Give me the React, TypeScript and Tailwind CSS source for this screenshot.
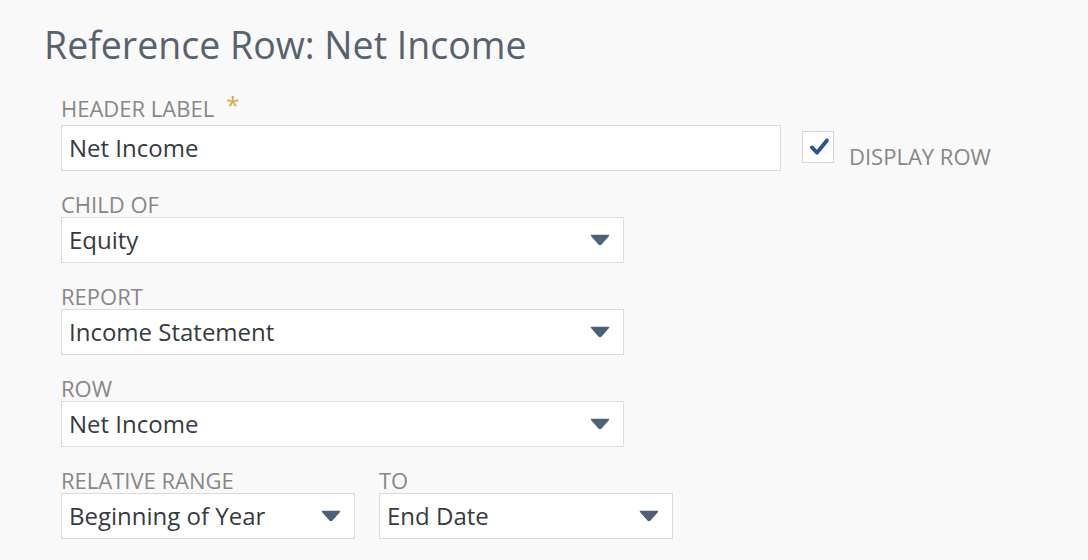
import React from "react";

function Arrow() {
  return (
    <svg width="20" height="12" viewBox="0 0 20 12" className="shrink-0">
      <path d="M1.5 1.5 L18.5 1.5 L11 10 Q10 11 9 10 Z" fill="#4c6077" stroke="#4c6077" strokeWidth="1.5" strokeLinejoin="round" />
    </svg>
  );
}

function Select({ value, width }: { value: string; width: string }) {
  return (
    <div className={`${width} h-[46px] bg-white border border-[#dadada] flex items-center justify-between pl-[7px] pr-[13px]`}>
      <span className="text-[24px] leading-none text-[#363b40]">{value}</span>
      <Arrow />
    </div>
  );
}

function Label({ children }: { children: React.ReactNode }) {
  return <div className="h-[22px] text-[22px] leading-[22px] text-[#878787] uppercase">{children}</div>;
}

function Field({ label, value, width }: { label: string; value: string; width: string }) {
  return (
    <div className="flex flex-col gap-[2px]">
      <Label>{label}</Label>
      <Select value={value} width={width} />
    </div>
  );
}

export default function App() {
  return (
    <div className="w-[1088px] h-[560px] bg-[#f9f9f9] overflow-hidden" style={{ fontFamily: '"Open Sans", "Liberation Sans", sans-serif' }}>
      <div className="pl-[44px] pt-[26px]">
        <h1 className="text-[37.5px] leading-[37px] font-normal text-[#56626d]">Reference Row: Net Income</h1>
      </div>
      <div className="pl-[61px] pt-[34px] flex flex-col gap-[22px]">
        <div className="flex flex-col gap-[6px]">
          <div className="flex items-start">
            <Label>Header Label</Label>
            <span className="ml-[12px] text-[24px] leading-[24px] text-[#dba63c] -mt-[4px]">*</span>
          </div>
          <div className="flex items-start">
            <div className="w-[720px] h-[46px] bg-white border border-[#dadada] flex items-center pl-[7px]">
              <span className="text-[24px] leading-none text-[#363b40]">Net Income</span>
            </div>
            <div className="ml-[21px] mt-[6px] flex items-end gap-[15px]">
              <div className="w-[32px] h-[32px] bg-white border border-[#d6d6d6] flex items-center justify-center">
                <svg width="32" height="32" viewBox="0 0 32 32">
                  <path d="M9.5 16.5 L15 22 L25.5 9" fill="none" stroke="#2f5493" strokeWidth="4.2" strokeLinecap="round" strokeLinejoin="round" />
                </svg>
              </div>
              <div className="text-[22px] leading-[22px] text-[#878787] -mb-[4px]">DISPLAY ROW</div>
            </div>
          </div>
        </div>
        <Field label="Child Of" value="Equity" width="w-[563px]" />
        <Field label="Report" value="Income Statement" width="w-[563px]" />
        <Field label="Row" value="Net Income" width="w-[563px]" />
        <div className="flex gap-[24px]">
          <Field label="Relative Range" value="Beginning of Year" width="w-[294px]" />
          <Field label="To" value="End Date" width="w-[294px]" />
        </div>
      </div>
    </div>
  );
}
